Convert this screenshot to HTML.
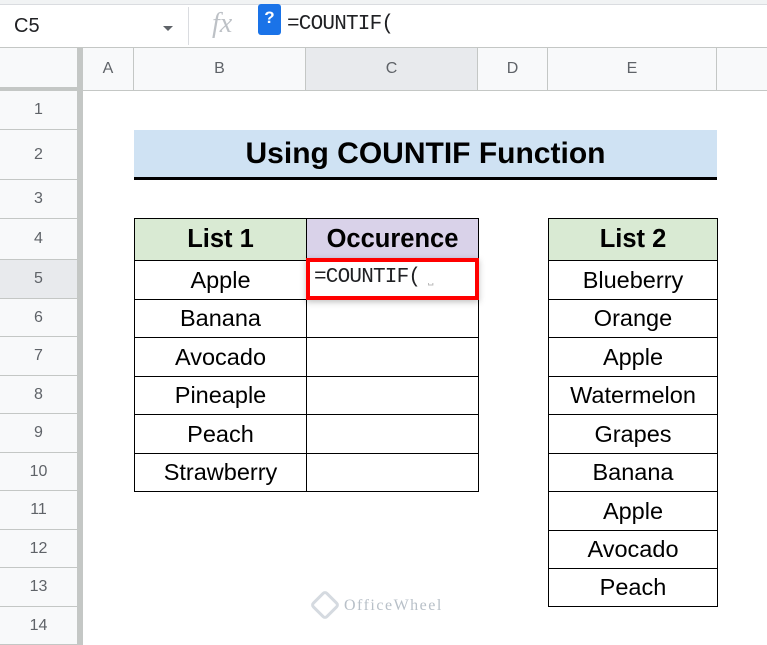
<!DOCTYPE html>
<html><head><style>
*{margin:0;padding:0;box-sizing:border-box}
body{width:767px;height:645px;overflow:hidden;background:#fff;font-family:"Liberation Sans",Arial,sans-serif;position:relative}
.a{position:absolute}
.rh{position:absolute;left:0;width:77px;background:#f8f9fa;border-bottom:1px solid #c4c7c5;color:#5f6368;font-size:16px;display:flex;align-items:center;justify-content:center}
.ch{position:absolute;top:48px;height:43px;background:#f8f9fa;border-right:1px solid #c4c7c5;border-bottom:1px solid #c4c7c5;color:#5f6368;font-size:16px;display:flex;align-items:center;justify-content:center}
.c{position:absolute;border:1px solid #000;display:flex;align-items:center;justify-content:center;font-size:23.5px;color:#000;background:#fff}
.h{font-weight:bold;font-size:25.5px}
.m{font-family:'Liberation Mono',monospace;font-size:21px;color:#202124;letter-spacing:-0.8px}
</style></head><body>
<div class="a" style="left:0;top:0;width:767px;height:5px;background:#f1f3f4;border-bottom:1px solid #dadce0"></div>
<div class="a" style="left:0;top:5px;width:767px;height:43px;background:#fff;border-bottom:1px solid #c4c7c5"></div>
<div class="a" style="left:14px;top:15px;font-size:20px;color:#202124">C5</div>
<div class="a" style="left:163px;top:26px;width:0;height:0;border-left:5px solid transparent;border-right:5px solid transparent;border-top:5px solid #5f6368"></div>
<div class="a" style="left:188px;top:7px;width:1px;height:38px;background:#dadce0"></div>
<div class="a" style="left:212px;top:8px;font-family:'Liberation Serif',serif;font-style:italic;font-size:28px;color:#bdc1c6">fx</div>
<div class="a" style="left:258px;top:4px;width:23px;height:31px;background:#1a73e8;border-radius:3px;color:#fff;font-weight:bold;font-size:17px;text-align:center;line-height:28px">?</div>
<div class="a m" style="left:287px;top:13px">=COUNTIF(</div>
<div class="a" style="left:0;top:48px;width:83px;height:43px;background:#f8f9fa;border-bottom:4px solid #c4c7c5;border-right:6px solid #c4c7c5"></div>
<div class="ch" style="left:83px;width:51px">A</div>
<div class="ch" style="left:134px;width:172px">B</div>
<div class="ch" style="left:306px;width:172px;background:#e8eaed">C</div>
<div class="ch" style="left:478px;width:70px">D</div>
<div class="ch" style="left:548px;width:169px">E</div>
<div class="ch" style="left:717px;width:60px"></div>
<div class="a" style="left:77px;top:91px;width:6px;height:554px;background:#c4c7c5"></div>
<div class="rh" style="top:91px;height:39px">1</div>
<div class="rh" style="top:130px;height:50px">2</div>
<div class="rh" style="top:180px;height:39px">3</div>
<div class="rh" style="top:219px;height:41px">4</div>
<div class="rh" style="top:260px;height:39px;background:#e8eaed">5</div>
<div class="rh" style="top:299px;height:38px">6</div>
<div class="rh" style="top:337px;height:39px">7</div>
<div class="rh" style="top:376px;height:38px">8</div>
<div class="rh" style="top:414px;height:39px">9</div>
<div class="rh" style="top:453px;height:38px">10</div>
<div class="rh" style="top:491px;height:39px">11</div>
<div class="rh" style="top:530px;height:38px">12</div>
<div class="rh" style="top:568px;height:39px">13</div>
<div class="rh" style="top:607px;height:38px">14</div>
<div class="a" style="left:134px;top:130px;width:583px;height:50px;background:#cfe2f3;border-bottom:3px solid #000;display:flex;align-items:center;justify-content:center;font-weight:bold;font-size:30px;color:#000">Using COUNTIF Function</div>
<div class="c h" style="left:134px;top:218px;width:173px;height:43px;background:#d9ead3">List 1</div>
<div class="c h" style="left:306px;top:218px;width:173px;height:43px;background:#d9d2e9">Occurence</div>
<div class="c" style="left:134px;top:260px;width:173px;height:40px">Apple</div>
<div class="c" style="left:134px;top:299px;width:173px;height:39px">Banana</div>
<div class="c" style="left:134px;top:337px;width:173px;height:40px">Avocado</div>
<div class="c" style="left:134px;top:376px;width:173px;height:39px">Pineaple</div>
<div class="c" style="left:134px;top:414px;width:173px;height:40px">Peach</div>
<div class="c" style="left:134px;top:453px;width:173px;height:39px">Strawberry</div>
<div class="c" style="left:306px;top:299px;width:173px;height:39px"></div>
<div class="c" style="left:306px;top:337px;width:173px;height:40px"></div>
<div class="c" style="left:306px;top:376px;width:173px;height:39px"></div>
<div class="c" style="left:306px;top:414px;width:173px;height:40px"></div>
<div class="c" style="left:306px;top:453px;width:173px;height:39px"></div>
<div class="a m" style="left:306px;top:258px;width:173px;height:42px;border:4px solid #f00;background:#fff;box-shadow:0 2px 6px rgba(0,0,0,.25);padding:4px 0 0 4px">=COUNTIF(<span style="color:#bbb;font-size:14px">&nbsp;⎵</span></div>
<div class="c h" style="left:548px;top:218px;width:170px;height:43px;background:#d9ead3">List 2</div>
<div class="c" style="left:548px;top:260px;width:170px;height:40px">Blueberry</div>
<div class="c" style="left:548px;top:299px;width:170px;height:39px">Orange</div>
<div class="c" style="left:548px;top:337px;width:170px;height:40px">Apple</div>
<div class="c" style="left:548px;top:376px;width:170px;height:39px">Watermelon</div>
<div class="c" style="left:548px;top:414px;width:170px;height:40px">Grapes</div>
<div class="c" style="left:548px;top:453px;width:170px;height:39px">Banana</div>
<div class="c" style="left:548px;top:491px;width:170px;height:40px">Apple</div>
<div class="c" style="left:548px;top:530px;width:170px;height:39px">Avocado</div>
<div class="c" style="left:548px;top:568px;width:170px;height:39px">Peach</div>
<div class="a" style="left:314px;top:594px;width:22px;height:22px;border:3px solid #d5dae0;transform:rotate(45deg);border-radius:4px"></div>
<div class="a" style="left:344px;top:597px;font-family:'Liberation Serif',serif;font-size:16px;color:#b8c0c8;letter-spacing:1.5px">OfficeWheel</div>
</body></html>
